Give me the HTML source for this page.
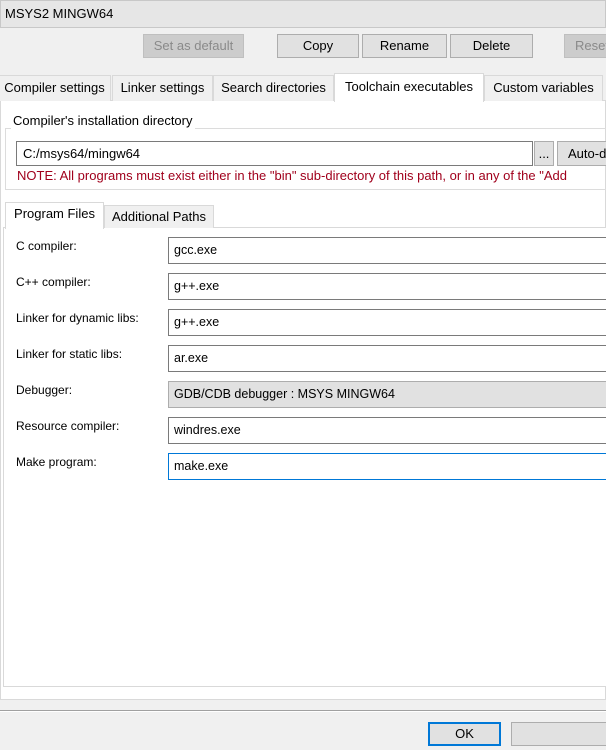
<!DOCTYPE html><html><head><style>
body{margin:0;width:606px;height:750px;overflow:hidden;background:#f0f0f0;font-family:"Liberation Sans",sans-serif;font-size:13px;color:#000;position:relative}
.a{position:absolute;box-sizing:border-box}
.btn{background:#e1e1e1;border:1px solid #adadad;text-align:center;line-height:22px;height:24px}
.tab{border:1px solid #d9d9d9;border-bottom:none;background:#f0f0f0;text-align:center;line-height:24px;height:26px;top:75px}
.lbl{left:16px;font-size:12px;line-height:16px}
.tb{left:168px;width:445px;height:27px;border:1px solid #7a7a7a;background:#fff;padding-left:5px;line-height:25px;font-size:12.5px}
</style></head><body>
<div class="a" style="left:0;top:0;width:606px;height:28px;background:#e6e6e6;border:1px solid #c8c8c8;padding-left:4px;line-height:26px">MSYS2 MINGW64</div>
<div class="a btn" style="left:143px;top:34px;width:101px;color:#8a8a8a;background:#ccc;border-color:#bfbfbf">Set as default</div>
<div class="a btn" style="left:277px;top:34px;width:82px">Copy</div>
<div class="a btn" style="left:362px;top:34px;width:85px">Rename</div>
<div class="a btn" style="left:450px;top:34px;width:83px">Delete</div>
<div class="a btn" style="left:564px;top:34px;width:60px;color:#8a8a8a;background:#ccc;border-color:#bfbfbf;text-align:left;padding-left:10px">Reset</div>
<div class="a" style="left:0;top:100px;width:606px;height:600px;background:#fff;border:1px solid #d9d9d9"></div>
<div class="a tab" style="left:-2px;width:113px">Compiler settings</div>
<div class="a tab" style="left:112px;width:101px">Linker settings</div>
<div class="a tab" style="left:213px;width:121px">Search directories</div>
<div class="a tab" style="left:334px;top:73px;height:29px;width:150px;background:#fff;line-height:26px">Toolchain executables</div>
<div class="a tab" style="left:484px;width:119px">Custom variables</div>
<div class="a" style="left:5px;top:128px;width:620px;height:62px;border:1px solid #dcdcdc"></div>
<div class="a" style="left:11px;top:112px;background:#fff;padding:0 2px;line-height:18px">Compiler's installation directory</div>
<div class="a" style="left:16px;top:141px;width:517px;height:25px;border:1px solid #7a7a7a;background:#fff;padding-left:6px;line-height:23px">C:/msys64/mingw64</div>
<div class="a btn" style="left:534px;top:141px;width:20px;height:25px;line-height:23px">...</div>
<div class="a btn" style="left:557px;top:141px;width:70px;height:25px;line-height:23px;text-align:left;padding-left:10px">Auto-d</div>
<div class="a" style="left:17px;top:167px;color:#a0001c;white-space:nowrap;line-height:18px">NOTE: All programs must exist either in the "bin" sub-directory of this path, or in any of the "Add</div>
<div class="a" style="left:3px;top:227px;width:606px;height:460px;border:1px solid #d9d9d9;background:#fff"></div>
<div class="a" style="left:5px;top:202px;width:99px;height:27px;border:1px solid #d9d9d9;border-bottom:none;background:#fff;text-align:center;line-height:22px">Program Files</div>
<div class="a" style="left:104px;top:205px;width:110px;height:23px;border:1px solid #d9d9d9;border-bottom:none;background:#f0f0f0;text-align:center;line-height:21px">Additional Paths</div>
<div class="a lbl" style="top:238px">C compiler:</div><div class="a tb" style="top:237px">gcc.exe</div>
<div class="a lbl" style="top:274px">C++ compiler:</div><div class="a tb" style="top:273px">g++.exe</div>
<div class="a lbl" style="top:310px">Linker for dynamic libs:</div><div class="a tb" style="top:309px">g++.exe</div>
<div class="a lbl" style="top:346px">Linker for static libs:</div><div class="a tb" style="top:345px">ar.exe</div>
<div class="a lbl" style="top:382px">Debugger:</div><div class="a tb" style="top:381px;background:#e1e1e1;border-color:#adadad">GDB/CDB debugger : MSYS MINGW64</div>
<div class="a lbl" style="top:418px">Resource compiler:</div><div class="a tb" style="top:417px">windres.exe</div>
<div class="a lbl" style="top:454px">Make program:</div><div class="a tb" style="top:453px;border-color:#0078d7">make.exe</div>
<div class="a" style="left:0;top:710px;width:606px;height:2px;border-top:1px solid #a0a0a0;border-bottom:1px solid #fff"></div>
<div class="a btn" style="left:428px;top:722px;width:73px;border:2px solid #0078d7;line-height:20px">OK</div>
<div class="a btn" style="left:511px;top:722px;width:100px"></div>
</body></html>
